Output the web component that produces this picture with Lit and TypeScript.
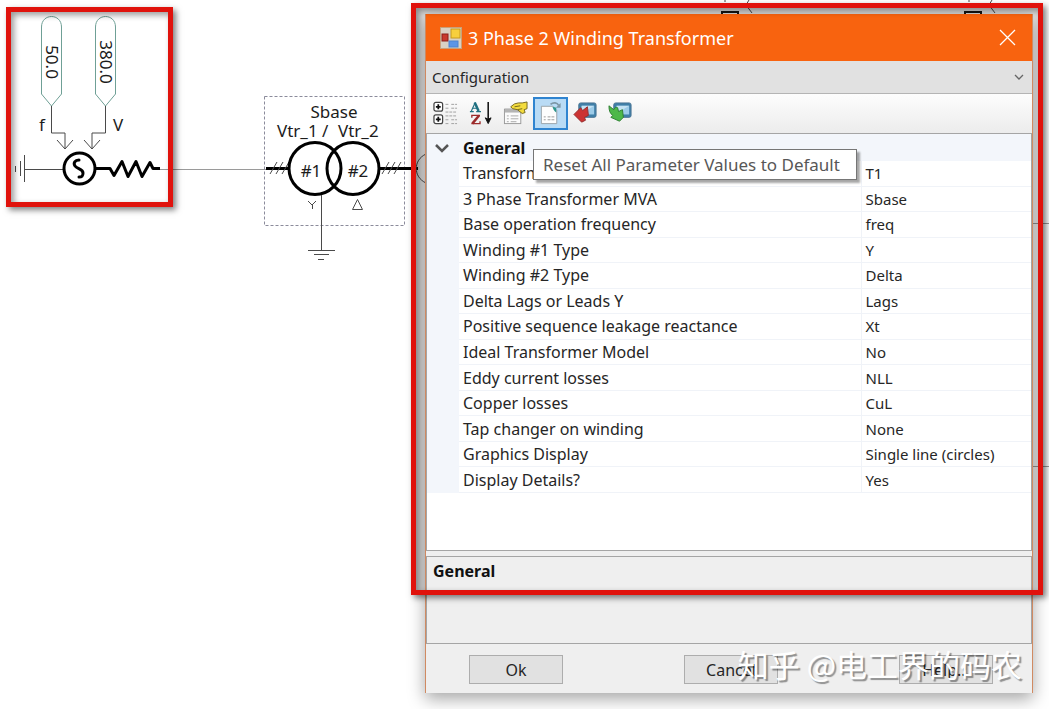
import { LitElement, html, svg, css } from "lit";
import { customElement, state } from "lit/decorators.js";

const ROWS: [string, string][] = [
  ["Transformer Name", "T1"],
  ["3 Phase Transformer MVA", "Sbase"],
  ["Base operation frequency", "freq"],
  ["Winding #1 Type", "Y"],
  ["Winding #2 Type", "Delta"],
  ["Delta Lags or Leads Y", "Lags"],
  ["Positive sequence leakage reactance", "Xt"],
  ["Ideal Transformer Model", "No"],
  ["Eddy current losses", "NLL"],
  ["Copper losses", "CuL"],
  ["Tap changer on winding", "None"],
  ["Graphics Display", "Single line (circles)"],
  ["Display Details?", "Yes"],
];

const categorizedIcon = svg`
  <g fill="#fff" stroke="#444" stroke-width="1.300">
    <rect x="1" y="1.500" width="9" height="9" rx="2"></rect>
    <rect x="1" y="14.500" width="9" height="9" rx="2"></rect>
  </g>
  <path d="M3 6h5M5.500 3.500v5M3 19h5M5.500 16.500v5" stroke="#111" stroke-width="1.800"></path>
  <path d="M13 3.500h4M19 3.500h6M13 7.500h4M19 7.500h6M13 11.500h12M13 15.500h12M13 19.500h4M19 19.500h6M13 23.500h4M19 23.500h6" stroke="#a0a0a0" stroke-dasharray="3 1"></path>`;

const sortIcon = svg`
  <g fill="none">
    <path d="M3.500 10.500l4-9" stroke="#1f6f80" stroke-width="1.200"></path>
    <path d="M7 1.500l4 9" stroke="#1f6f80" stroke-width="2.600"></path>
    <path d="M5 7.500h5M2 11h4M8.500 11h5" stroke="#1f6f80" stroke-width="1.200"></path>
    <path d="M4 17.500v-2.500h8.500M3.500 23.500h9v-2.500" stroke="#9c2a2a" stroke-width="1.400"></path>
    <path d="M11.500 15l-7 8.500" stroke="#9c2a2a" stroke-width="2.600"></path>
    <path d="M21 1v20" stroke="#111" stroke-width="1.600"></path>
  </g>
  <path d="M18 17.500l3 6 3-6-3 1.500z" fill="#111" stroke="#111"></path>`;

const pagesIcon = svg`
  <rect x="1.500" y="8.500" width="17" height="15" fill="#fbfbfb" stroke="#9a9a9a"></rect>
  <rect x="2" y="8" width="16" height="4" fill="#b4b4b4"></rect>
  <path d="M4 15.500h2M8 15.500h8M4 18.500h2M8 18.500h8M4 21.500h2M8 21.500h6" stroke="#aaa"></path>
  <path d="M8 6l4-3 4-1h4l5-1v7l-3 1 1 3-3 1-5-4-5-1z" fill="#f3dc3e" stroke="#77681d"></path>
  <path d="M12 6l6-1M15 9l5-1" stroke="#77681d"></path>`;

const resetIcon = svg`
  <path d="M3.500 5.500h12l4 4v14h-16z" fill="#fdfdfd" stroke="#9aa3aa"></path>
  <path d="M6 16.500h2M10 16.500h3M14 16.500h3M6 19.500h2M10 19.500h3M14 19.500h3" stroke="#9a9a9a"></path>
  <path d="M13 3.500c3-2.500 7-2 8.500 1" fill="none" stroke="#7d97a6" stroke-width="1.800"></path>
  <path d="M23.500 2v5h-5z" fill="#7d97a6"></path>
  <path d="M15 6l4 1v5c-2-1-3-3-4-6z" fill="#2f968c"></path>`;

const windowShape = svg`
  <rect x="6" y="2" width="18" height="15" rx="2" fill="#3f7fa8" stroke="#4a7594"></rect>
  <rect x="9" y="5" width="13" height="9" fill="#9ccbe8"></rect>
  <path d="M9 5h13l-13 8z" fill="#c4e2f3"></path>`;

const importIcon = svg`${windowShape}
  <path d="M1 14l7-7 2 3 5-4 1 9-4 2 1 3-4 2z" fill="#cc3333" stroke="#943030"></path>`;

const exportIcon = svg`${windowShape}
  <path d="M1 5l5 4c1-2 2-3 4-2l1 4 4-2 1 8-4 4-9-4 2-2c-3-2-4-5-4-10z" fill="#4db848" stroke="#2f8033"></path>`;

const TOOLS = [
  { label: "Categorized", icon: categorizedIcon },
  { label: "Alphabetical", icon: sortIcon },
  { label: "Property Pages", icon: pagesIcon },
  { label: "Reset All Parameter Values to Default", icon: resetIcon },
  { label: "Import Parameters", icon: importIcon },
  { label: "Export Parameters", icon: exportIcon },
];

@customElement("circuit-canvas")
export class CircuitCanvas extends LitElement {
  static styles = css`
    :host { display: block; }
    .sheet { display: block; width: 100%; height: 100vh; }
    .thin { fill: none; stroke: #4a4a4a; stroke-width: 1; }
    .wire { stroke: #9a9a9a; stroke-width: 1; }
    .heavy { fill: none; stroke: #000; stroke-width: 3; stroke-linejoin: round; }
    .box { fill: none; stroke: #111; stroke-width: 2; }
    .pill { fill: #fff; stroke: #6fa096; stroke-width: 1; }
    .bounds { fill: none; stroke: #8b8b9b; stroke-width: 1; stroke-dasharray: 3 2; }
    .label { font: 17px "Noto Sans", sans-serif; fill: #1c1c1c; }
    .center { text-anchor: middle; }
  `;

  render() {
    return html`
      <svg class="sheet" role="img" aria-label="Single line circuit">
        <path class="pill" d="M41.500 94V27c0-14 20-14 20 0V94l-10 12z"></path>
        <path class="pill" d="M95.500 94V27c0-14 20-14 20 0V94l-10 12z"></path>
        <text class="label center" transform="translate(46 62) rotate(90)">50.0</text>
        <text class="label center" transform="translate(100 62) rotate(90)">380.0</text>
        <path class="thin" d="M51.500 106v27h13.500v16M57 140l8 9 8-9M105.500 106v27H92v16M84 140l8 9 8-9"></path>
        <text class="label" x="39" y="131">f</text>
        <text class="label" x="113" y="131">V</text>

        <path class="thin" d="M24.500 155v27M20.500 161v15M15.500 166v6M25 169.500h38"></path>
        <circle class="heavy" cx="79.500" cy="168.500" r="15.500"></circle>
        <path class="heavy" d="M79 160c-4 0-6 3-4 6s8 3 8 7-2 4-4 4" stroke-linecap="round"></path>
        <path class="heavy" d="M96 168.500h14l4 7 8-14 6 15 8-15 6 15 8-14 3 6h7"></path>
        <path class="wire" d="M160 169.500H266"></path>

        <rect class="bounds" x="264.500" y="96.500" width="140" height="129"></rect>
        <text class="label center" x="334" y="118">Sbase</text>
        <text class="label" x="277" y="137">Vtr_1 /</text>
        <text class="label" x="338" y="137">Vtr_2</text>
        <path class="heavy" d="M266 168.500h23M380 168.500h38"></path>
        <path class="thin" d="M270 174l7-12M276 174l7-12M282 174l7-12M382 174l7-12M388 174l7-12M394 174l7-12"></path>
        <circle class="heavy" cx="315" cy="168.500" r="26"></circle>
        <circle class="heavy" cx="353" cy="168.500" r="26"></circle>
        <text class="label center" x="311" y="177">#1</text>
        <text class="label center" x="358" y="177">#2</text>
        <path class="thin" d="M308 201l4 4 4-4M312.500 205v4M352.500 209.500h10l-5-10zM321.500 195v55M308 250.500h27M314 254.500h15M318 259.500h6"></path>

        <path class="thin" d="M426 154c-13 6-13 23 0 29"></path>
        <path class="thin" d="M725 0v2M749 0l-3 5 6 8M969 0v2M992 0l-3 5 6 8"></path>
        <path class="box" d="M722 20v-8h16v8M965 20v-8h16v8"></path>
        <path class="wire" d="M1030 223.500H2400M1030 466.500H2400"></path>
      </svg>
    `;
  }
}

@customElement("transformer-dialog")
export class TransformerDialog extends LitElement {
  @state() private expanded = true;

  static styles = css`
    :host {
      display: block;
      box-sizing: border-box;
      border: 1px solid #d08a62;
      border-top: 0;
      border-bottom: 0;
      background: #efefef;
      box-shadow: 0 6px 16px rgba(0, 0, 0, 0.35);
      color: #262626;
      font: 16px "Noto Sans", sans-serif;
    }
    button, select { font: inherit; color: inherit; }
    .titlebar {
      display: flex;
      align-items: center;
      gap: 6px;
      height: 47px;
      padding: 0 16px 0 14px;
      background: #f8630f;
      color: #fff;
    }
    .title { flex: 1; margin: 0; font-size: 18px; font-weight: 400; }
    .close { display: flex; padding: 0; border: 0; background: none; }
    .section { position: relative; display: flex; border-bottom: 1px solid #b4b4b4; }
    .picker {
      flex: 1;
      height: 32px;
      padding: 0 6px;
      border: 0;
      border-radius: 0;
      appearance: none;
      background: #e1e1e1;
      font-size: 15px;
    }
    .arrow { position: absolute; right: 8px; top: 12px; pointer-events: none; }
    .toolbar {
      display: flex;
      align-items: center;
      height: 39px;
      padding: 0 2px;
      background: linear-gradient(#fdfdfd, #ececec);
    }
    .tool {
      display: flex;
      align-items: center;
      justify-content: center;
      width: 35px;
      height: 33px;
      padding: 0;
      border: 1px solid transparent;
      background: none;
    }
    .tool.hot { border: 2px solid #2f84d0; background: #b9dbf5; }
    .gridbox {
      height: 416px;
      border: 1px solid #a5a5a5;
      background: #fff;
    }
    .grid {
      width: 100%;
      height: 359px;
      border-collapse: collapse;
      table-layout: fixed;
      background: #fff;
    }
    .gutter { width: 32px; }
    .values { width: 170px; }
    .grid th, .grid td { padding: 0; font-weight: 400; text-align: left; line-height: 24px; white-space: nowrap; }
    .category { height: 27px; }
    .category, .side { background: #f3f6fb; }
    .grid .heading { font-weight: 700; color: #111; padding-left: 4px; }
    .grid .name { padding-left: 4px; border-bottom: 1px solid #f0f3f8; border-right: 1px solid #f0f3f8; }
    .grid .value { padding-left: 4px; border-bottom: 1px solid #f0f3f8; font-size: 15px; }
    .toggle { display: flex; margin-left: 8px; padding: 0; border: 0; background: none; }
    .help { height: 86px; margin-top: 5px; border: 1px solid #a5a5a5; }
    .helptitle { margin: 0; padding: 2px 6px; font-size: 16px; line-height: 24px; font-weight: 700; color: #111; }
    .footer {
      display: flex;
      justify-content: space-between;
      padding: 11px 39px 9px 43px;
    }
    .action {
      width: 94px;
      height: 29px;
      padding: 0;
      border: 1px solid #adadad;
      background: #e1e1e1;
    }
  `;

  private toggle() {
    this.expanded = !this.expanded;
  }

  render() {
    return html`
      <header class="titlebar">
        <svg width="22" height="22" viewBox="0 0 22 22" aria-hidden="true">
          <rect x="0.500" y="0.500" width="21" height="21" fill="#d9d2c4" stroke="#c9a07a"></rect>
          <rect x="11" y="2" width="9" height="9" fill="#f7cf3c" stroke="#c89a1c"></rect>
          <rect x="2" y="7" width="6" height="7" fill="#c83b2e" stroke="#8d2018"></rect>
          <rect x="9" y="14" width="9" height="6" fill="#5b95e6" stroke="#4d83cf"></rect>
        </svg>
        <h1 class="title">3 Phase 2 Winding Transformer</h1>
        <button class="close" aria-label="Close">
          <svg width="17" height="17" viewBox="0 0 17 17"><path d="M1 1l15 15M16 1L1 16" stroke="#fff" stroke-width="1.300"></path></svg>
        </button>
      </header>
      <div class="section">
        <select class="picker" aria-label="Section"><option>Configuration</option></select>
        <svg class="arrow" width="10" height="8" viewBox="0 0 10 8"><path d="M1 2l4 4 4-4" fill="none" stroke="#666" stroke-width="1.300"></path></svg>
      </div>
      <div class="toolbar" role="toolbar">
        ${TOOLS.map((tool, i) => html`
          <button class="tool ${i === 3 ? "hot" : ""}" aria-label=${tool.label}>
            <svg width="25" height="25" viewBox="0 0 26 26">${tool.icon}</svg>
          </button>`)}
      </div>
      <div class="gridbox">
        <table class="grid">
          <colgroup><col class="gutter"><col><col class="values"></colgroup>
          <tbody>
            <tr class="category">
              <td>
                <button class="toggle" aria-label="Toggle General" @click=${this.toggle}>
                  <svg width="14" height="10" viewBox="0 0 14 10"><path d="M1 2l6 6 6-6" fill="none" stroke="#555" stroke-width="2.500"></path></svg>
                </button>
              </td>
              <th class="heading" colspan="2">General</th>
            </tr>
            ${this.expanded ? ROWS.map(([name, value]) => html`
              <tr>
                <td class="side"></td>
                <th class="name" scope="row">${name}</th>
                <td class="value">${value}</td>
              </tr>`) : null}
          </tbody>
        </table>
      </div>
      <section class="help"><h2 class="helptitle">General</h2></section>
      <footer class="footer">
        <button class="action">Ok</button>
        <button class="action">Cancel</button>
        <button class="action">Help...</button>
      </footer>
    `;
  }
}

@customElement("app-root")
export class AppRoot extends LitElement {
  static styles = css`
    :host {
      display: block;
      position: relative;
      min-height: 100vh;
      overflow: hidden;
      background: #fff;
      font-family: "Noto Sans", sans-serif;
    }
    .window { position: absolute; left: 425px; right: 16px; top: 14px; }
    .mark {
      position: absolute;
      box-sizing: border-box;
      border: 5px solid #e0120c;
      box-shadow: 3px 3px 6px rgba(0, 0, 0, 0.5), inset 3px 3px 6px rgba(0, 0, 0, 0.4);
      pointer-events: none;
    }
    .source { left: 6px; top: 7px; width: 167px; height: 200px; }
    .dialog { left: 411px; right: 6px; top: 3px; height: 592px; }
    .shade { position: absolute; left: 413px; right: 8px; top: 5px; height: 588px; background: rgba(60, 50, 40, 0.14); }
    .tip {
      position: absolute;
      left: 533px;
      top: 149px;
      padding: 0 16px 0 9px;
      border: 1px solid #767676;
      background: #fff;
      box-shadow: 3px 3px 2px rgba(0, 0, 0, 0.35);
      color: #575757;
      font-size: 17px;
      line-height: 29px;
      white-space: nowrap;
    }
    .watermark {
      position: absolute;
      right: 27px;
      bottom: 23px;
      color: #fff;
      font: 31px/44px "Noto Sans CJK SC", sans-serif;
      text-shadow: 2px 2px 1px rgba(0, 0, 0, 0.4);
      pointer-events: none;
    }
  `;

  render() {
    return html`
      <circuit-canvas></circuit-canvas>
      <div class="shade"></div>
      <transformer-dialog class="window"></transformer-dialog>
      <div class="mark source"></div>
      <div class="mark dialog"></div>
      <div class="tip" role="tooltip">Reset All Parameter Values to Default</div>
      <div class="watermark">知乎 @电工界的码农</div>
    `;
  }
}
